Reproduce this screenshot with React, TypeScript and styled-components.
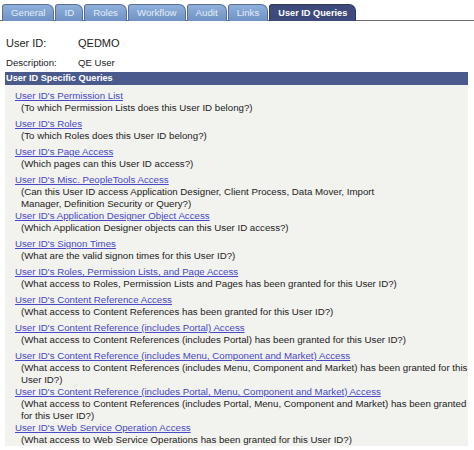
import React from "react";
import styled, { createGlobalStyle } from "styled-components";

const GlobalStyle = createGlobalStyle`
  body {
    margin: 0;
    background: #fff;
    font-family: "Liberation Sans", Arial, sans-serif;
    color: #222;
  }
`;

const Page = styled.div`
  width: 474px;
`;

const TabStrip = styled.div`
  display: flex;
  align-items: flex-end;
  gap: 1px;
  height: 21px;
  padding-left: 2px;
  border-bottom: 1px solid #6d6d6d;
  box-sizing: border-box;
`;

const Tab = styled.div<{ $active?: boolean }>`
  height: 16px;
  line-height: 16px;
  padding: 0 8px;
  box-sizing: content-box;
  border: 1px solid ${p => (p.$active ? "#2e3860" : "#5b6f95")};
  border-bottom: none;
  border-radius: 3px 7px 0 0;
  background: ${p =>
    p.$active
      ? "#3e4a7c"
      : "linear-gradient(#8eb0dc, #6e92c4)"};
  color: ${p => (p.$active ? "#fff" : "#e4ecf7")};
  font-size: ${p => (p.$active ? "9.2px" : "9.7px")};
  font-weight: ${p => (p.$active ? "bold" : "normal")};
  white-space: nowrap;
  margin-bottom: -1px;
`;

const Info = styled.div`
  padding: 15px 0 0 6px;
`;

const InfoRow = styled.div<{ $big?: boolean }>`
  display: flex;
  font-size: ${p => (p.$big ? "11px" : "9.6px")};
  line-height: ${p => (p.$big ? "14px" : "12px")};
  margin-bottom: ${p => (p.$big ? "7px" : "0")};
`;

const InfoLabel = styled.span`
  width: 72px;
`;

const Section = styled.div`
  margin: 3px 6px 0 5px;
`;

const SectionHead = styled.div`
  height: 13px;
  line-height: 13px;
  padding-left: 1px;
  background: #4a5a8c;
  color: #fff;
  font-size: 9.2px;
  font-weight: bold;
`;

const SectionBody = styled.div`
  background: #f2f2ee;
  padding: 5px 0 0 10px;
`;

const Item = styled.div`
  min-height: 28px;
  font-size: 9.7px;
  line-height: 12px;
  &:last-child {
    min-height: 0;
  }
`;

const ItemLink = styled.a`
  color: #4848c8;
  text-decoration: underline;
  white-space: nowrap;
`;

const ItemDesc = styled.div`
  padding-left: 6px;
  white-space: nowrap;
`;

const tabs = ["General", "ID", "Roles", "Workflow", "Audit", "Links", "User ID Queries"];

const queries: { title: string; desc: string[] }[] = [
  { title: "User ID's Permission List", desc: ["(To which Permission Lists does this User ID belong?)"] },
  { title: "User ID's Roles", desc: ["(To which Roles does this User ID belong?)"] },
  { title: "User ID's Page Access", desc: ["(Which pages can this User ID access?)"] },
  {
    title: "User ID's Misc. PeopleTools Access",
    desc: [
      "(Can this User ID access Application Designer, Client Process, Data Mover, Import",
      "Manager, Definition Security or Query?)",
    ],
  },
  {
    title: "User ID's Application Designer Object Access",
    desc: ["(Which Application Designer objects can this User ID access?)"],
  },
  { title: "User ID's Signon Times", desc: ["(What are the valid signon times for this User ID?)"] },
  {
    title: "User ID's Roles, Permission Lists, and Page Access",
    desc: ["(What access to Roles, Permission Lists and Pages has been granted for this User ID?)"],
  },
  {
    title: "User ID's Content Reference Access",
    desc: ["(What access to Content References has been granted for this User ID?)"],
  },
  {
    title: "User ID's Content Reference (includes Portal) Access",
    desc: ["(What access to Content References (includes Portal) has been granted for this User ID?)"],
  },
  {
    title: "User ID's Content Reference (includes Menu, Component and Market) Access",
    desc: [
      "(What access to Content References (includes Menu, Component and Market) has been granted for this",
      "User ID?)",
    ],
  },
  {
    title: "User ID's Content Reference (includes Portal, Menu, Component and Market) Access",
    desc: [
      "(What access to Content References (includes Portal, Menu, Component and Market) has been granted",
      "for this User ID?)",
    ],
  },
  {
    title: "User ID's Web Service Operation Access",
    desc: ["(What access to Web Service Operations has been granted for this User ID?)"],
  },
];

const App = () => {
  return (
    <Page>
      <GlobalStyle />
      <TabStrip>
        {tabs.map(t => (
          <Tab key={t} $active={t === "User ID Queries"}>
            {t}
          </Tab>
        ))}
      </TabStrip>
      <Info>
        <InfoRow $big>
          <InfoLabel>User ID:</InfoLabel>
          <span>QEDMO</span>
        </InfoRow>
        <InfoRow>
          <InfoLabel>Description:</InfoLabel>
          <span>QE User</span>
        </InfoRow>
      </Info>
      <Section>
        <SectionHead>User ID Specific Queries</SectionHead>
        <SectionBody>
          {queries.map(q => (
            <Item key={q.title}>
              <ItemLink href="#">{q.title}</ItemLink>
              {q.desc.map(line => (
                <ItemDesc key={line}>{line}</ItemDesc>
              ))}
            </Item>
          ))}
        </SectionBody>
      </Section>
    </Page>
  );
};

export default App;
